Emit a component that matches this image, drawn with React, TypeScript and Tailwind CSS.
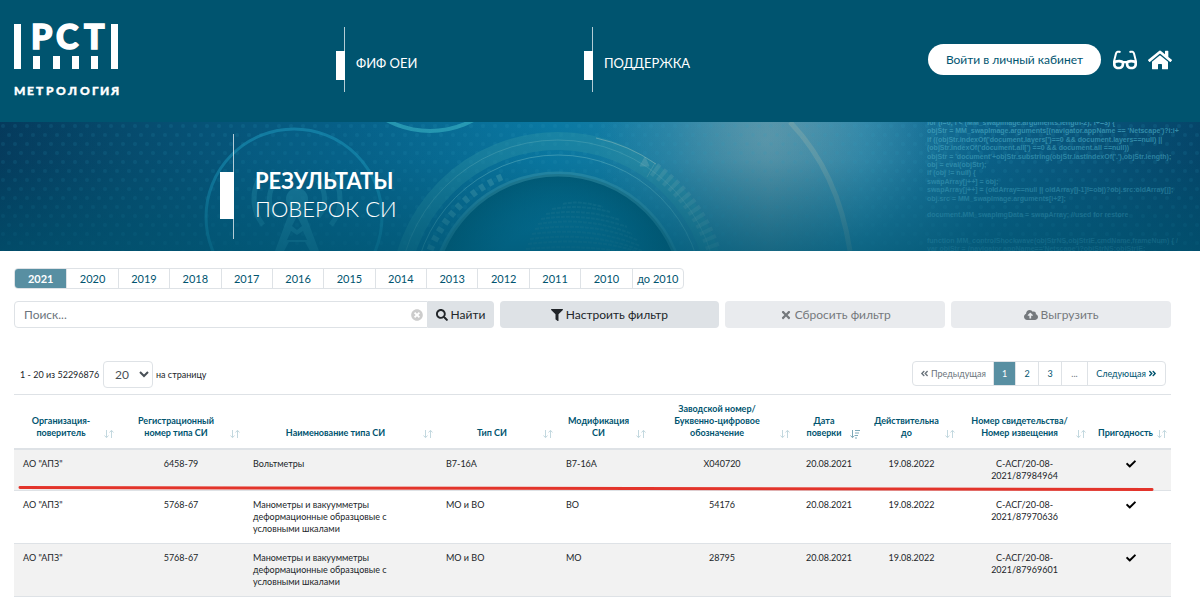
import {
  FaAngleDoubleLeft,
  FaAngleDoubleRight,
  FaCheck,
  FaCloudUploadAlt,
  FaFilter,
  FaGlasses,
  FaHome,
  FaSearch,
  FaTimes,
  FaTimesCircle,
} from "react-icons/fa";
import clsx from "clsx";

const years = [
  "2021", "2020", "2019", "2018", "2017", "2016", "2015",
  "2014", "2013", "2012", "2011", "2010", "до 2010",
];

const columns = [
  { title: "Организация-\nповеритель", col: "w-[104px]", align: "text-left" },
  { title: "Регистрационный\nномер типа СИ", col: "w-[126px]", align: "text-center" },
  { title: "Наименование типа СИ", col: "w-[193px]", align: "text-left" },
  { title: "Тип СИ", col: "w-[120px]", align: "text-left" },
  { title: "Модификация\nСИ", col: "w-[93px]", align: "text-left" },
  { title: "Заводской номер/\nБуквенно-цифровое\nобозначение", col: "w-[144px]", align: "text-center" },
  { title: "Дата\nповерки", col: "w-[70px]", align: "text-center", sorted: true },
  { title: "Действительна\nдо", col: "w-[95px]", align: "text-center" },
  { title: "Номер свидетельства/\nНомер извещения", col: "w-[131px]", align: "text-center" },
  { title: "Пригодность", col: "w-[81px]", align: "text-center" },
];

const rows = [
  ['АО "АПЗ"', "6458-79", "Вольтметры", "В7-16А", "В7-16А", "Х040720", "20.08.2021", "19.08.2022", "С-АСГ/20-08-\n2021/87984964"],
  ['АО "АПЗ"', "5768-67", "Манометры и вакуумметры\nдеформационные образцовые с\nусловными шкалами", "МО и ВО", "ВО", "54176", "20.08.2021", "19.08.2022", "С-АСГ/20-08-\n2021/87970636"],
  ['АО "АПЗ"', "5768-67", "Манометры и вакуумметры\nдеформационные образцовые с\nусловными шкалами", "МО и ВО", "МО", "28795", "20.08.2021", "19.08.2022", "С-АСГ/20-08-\n2021/87969601"],
];

const codeLines = [
  "for (i=0; i < (MM_swapImage.arguments.length-2); i+=3) {",
  "objStr = MM_swapImage.arguments[(navigator.appName == 'Netscape')?i:i+",
  "if ((objStr.indexOf('document.layers[')==0 && document.layers==null) ||",
  "(objStr.indexOf('document.all[')   ==0 && document.all   ==null))",
  "objStr = 'document'+objStr.substring(objStr.lastIndexOf('.'),objStr.length);",
  "obj = eval(objStr);",
  "if (obj != null) {",
  "swapArray[j++] = obj;",
  "swapArray[j++] = (oldArray==null || oldArray[j-1]!=obj)?obj.src:oldArray[j];",
  "obj.src = MM_swapImage.arguments[i+2];",
  "",
  "document.MM_swapImgData = swapArray; //used for restore",
  "",
  "",
  "function MM_controlShockwave(objStrNS,objStrIE,cmdName,frameNum) { /",
  "var objStr = (navigator.appName=='Netscape')?objStrNS:objStrIE;",
];

function Logo() {
  return (
    <a href="#" aria-label="РСТ Метрология" className="shrink-0 text-white">
      <svg width="106" height="73" viewBox="0 0 106 73" fill="currentColor" className="overflow-visible">
        <rect x="0" y="1" width="7" height="45" />
        <rect x="97" y="1" width="7" height="45" />
        <rect x="19" y="33" width="7" height="13" />
        <rect x="39" y="33" width="7" height="13" />
        <rect x="58" y="33" width="7" height="13" />
        <rect x="77" y="33" width="7" height="13" />
        <g stroke="currentColor" strokeWidth="1.5" className="font-['Lato',sans-serif] font-black">
          <text x="17 42 70" y="26" fontSize="34">
            РСТ
          </text>
        </g>
        <text
          x="0 13 22 32 42 54 66 78 86 97"
          y="72"
          fontSize="12"
          stroke="currentColor"
          strokeWidth="0.4"
          className="font-['Lato',sans-serif] font-black"
        >
          МЕТРОЛОГИЯ
        </text>
      </svg>
    </a>
  );
}

function NavItem({ label }: { label: string }) {
  return (
    <a href="#" className="flex w-[248px] items-center gap-[11px] text-[13px] text-white">
      <svg width="9" height="65" viewBox="0 0 9 65">
        <rect x="8" width="1" height="65" fill="#fff" opacity="0.7" />
        <rect y="24" width="9" height="29" fill="#fff" />
      </svg>
      <span className="pt-2">{label}</span>
    </a>
  );
}

function BannerArt() {
  return (
    <svg
      className="absolute inset-0 h-full w-full"
      viewBox="0 0 1200 129"
      preserveAspectRatio="xMidYMid slice"
      aria-hidden="true"
    >
      <defs>
        <linearGradient id="base" x1="0" x2="1" y1="0" y2="0">
          <stop offset="0" stopColor="#053a5c" />
          <stop offset="0.1" stopColor="#064a6c" />
          <stop offset="0.28" stopColor="#065f87" />
          <stop offset="0.46" stopColor="#0a79a3" />
          <stop offset="0.56" stopColor="#1a7ea4" />
          <stop offset="0.64" stopColor="#4089a4" />
          <stop offset="0.72" stopColor="#2583a8" />
          <stop offset="0.82" stopColor="#0b6189" />
          <stop offset="1" stopColor="#054569" />
        </linearGradient>
        <linearGradient id="fade" x1="0" x2="0" y1="0" y2="1">
          <stop offset="0" stopColor="#00546f" stopOpacity="0" />
          <stop offset="0.3" stopColor="#00546f" stopOpacity="0.08" />
          <stop offset="1" stopColor="#00546f" stopOpacity="0.65" />
        </linearGradient>
        <radialGradient id="glow">
          <stop offset="0" stopColor="#8ab0b8" stopOpacity="0.38" />
          <stop offset="1" stopColor="#8ab0b8" stopOpacity="0" />
        </radialGradient>
        <radialGradient id="disc">
          <stop offset="0.6" stopColor="#05769e" />
          <stop offset="1" stopColor="#005a76" />
        </radialGradient>
        <pattern id="dots" width="12" height="18" patternUnits="userSpaceOnUse">
          <circle cx="3" cy="4" r="2" fill="#2a9dc0" opacity="0.14" />
          <circle cx="9" cy="13" r="2" fill="#2a9dc0" opacity="0.14" />
        </pattern>
      </defs>
      <rect width="1200" height="129" fill="url(#base)" />
      <ellipse cx="765" cy="20" rx="170" ry="120" fill="url(#glow)" />
      <rect width="1200" height="129" fill="url(#dots)" />

      {/* antenna badge */}
      <circle cx="294" cy="95" r="88" fill="#0a7094" fillOpacity="0.2" stroke="#1b93b8" strokeWidth="3" strokeOpacity="0.6" />
      <g fill="none" stroke="#2b92b0" strokeWidth="5" opacity="0.45">
        <path d="M276 59a28 28 0 0 0 0 36M318 59a28 28 0 0 1 0 36" />
        <path d="M263 51a42 42 0 0 0 0 52M331 51a42 42 0 0 1 0 52" />
      </g>
      <circle cx="297" cy="77" r="11" fill="#2b92b0" opacity="0.55" />
      <path d="M291 86h12l16 43h-9l-5-9h-16l-5 9h-9zM297 94l-5 10 5 4 5-4zM291 109l-4 9h20l-4-9-6 4z" fill="#2b92b0" fillRule="evenodd" opacity="0.55" />
      <circle cx="430" cy="-82" r="91" fill="none" stroke="#3bb5c6" strokeWidth="4" opacity="0.6" />

      {/* dial */}
      <g fill="none">
        <circle cx="558" cy="178" r="159" stroke="#2f97a8" strokeWidth="18" opacity="0.4" />
        <circle cx="558" cy="178" r="160" stroke="#6db8c0" strokeWidth="1" opacity="0.35" />
        <circle cx="558" cy="178" r="145" stroke="#5cb1c2" strokeWidth="1" opacity="0.6" />
        <path d="M430 128A137 137 0 0 1 504 54" stroke="#5fb2bd" strokeWidth="7" strokeDasharray="5 5" opacity="0.4" />
        <path d="M654 47A162 162 0 0 1 714 129" stroke="#6fb0ba" strokeWidth="14" strokeDasharray="4 4" opacity="0.3" />
        <path d="M640 44l5-9 4 9zM655 41l-8 14" fill="#7fb5bd" stroke="#7fb5bd" opacity="0.35" />
        <path d="M596 16a168 168 0 0 1 60 26" stroke="#9cc3bf" strokeWidth="1" opacity="0.5" />
      </g>
      <circle cx="558" cy="178" r="126" fill="url(#disc)" stroke="#43a0b4" strokeOpacity="0.5" strokeWidth="5" />
      <g fill="none" stroke="#3f94a6" strokeWidth="2" strokeDasharray="4 1" opacity="0.25">
        <path d="M563 82q15-4 40 3M552 87q30-5 58 3M546 92q38-6 74 6M541 97q44-7 86 8M538 102q50-8 94 10M535 107q56-8 102 11M532 112q60-8 108 12M530 117q64-8 112 12M528 122q68-8 116 10M526 127q70-6 119 8" />
      </g>

      <path d="M790 0Q838 50 850 129" fill="none" stroke="#a9bcae" strokeWidth="5" opacity="0.28" />
      <rect width="1200" height="129" fill="url(#fade)" />
      <g fill="#45a5c0" opacity="0.75" fontSize="7" className="font-['Liberation_Sans',sans-serif] font-bold">
        {codeLines.map((line, i) => (
          <text key={i} x="927" y={3 + i * 8.4} opacity={1 - i * 0.05}>
            {line}
          </text>
        ))}
      </g>
    </svg>
  );
}

function SortIcon({ sorted }: { sorted?: boolean }) {
  return (
    <svg
      width="10"
      height="10"
      viewBox="0 0 10 10"
      fill="none"
      stroke={sorted ? "#7fa9b9" : "#c3d8df"}
      className="shrink-0"
    >
      <path d="M2.5 1v7.5M0.5 6.5l2 2.2 2-2.2" />
      {sorted ? (
        <path d="M5 1.5h5M5 4h4M5 6.5h3M5 9h2" />
      ) : (
        <path d="M7.5 9V1.5M5.5 3.5l2-2.2 2 2.2" />
      )}
    </svg>
  );
}

export default function App() {
  return (
    <div className="min-h-screen bg-white font-['Lato','Noto_Sans',sans-serif] text-[#212529]">
      <header className="flex items-center bg-[#00546f] pt-[23px] pr-[28px] pb-[26px] pl-[14px]">
        <Logo />
        <nav className="ml-[216px] flex flex-1">
          <NavItem label="ФИФ ОЕИ" />
          <NavItem label="ПОДДЕРЖКА" />
        </nav>
        <button className="h-[31px] rounded-full bg-white px-[18px] text-xs text-[#00546f]">
          Войти в личный кабинет
        </button>
        <a href="#" aria-label="Версия для слабовидящих" className="ml-3 text-white">
          <FaGlasses size={24} />
        </a>
        <a href="#" aria-label="Главная" className="ml-[11px] text-white">
          <FaHome size={24} />
        </a>
      </header>

      <section className="relative bg-[#065f87]">
        <BannerArt />
        <div className="relative flex h-[129px] items-center gap-[21px] pl-[220px] text-white">
          <svg width="14" height="105" viewBox="0 0 14 105">
            <rect x="13" width="1" height="105" fill="#fff" opacity="0.7" />
            <rect y="38" width="14" height="47" fill="#fff" />
          </svg>
          <h1 className="pt-4 text-[22px] leading-7 font-light">
            <span className="block font-bold">РЕЗУЛЬТАТЫ</span>
            <span className="block">ПОВЕРОК СИ</span>
          </h1>
        </div>
      </section>

      <main className="pt-[17px] pr-[29px] pb-1 pl-[14px]">
        {/* Years */}
        <div className="grid w-[670px] grid-cols-13 overflow-hidden rounded border border-[#dee2e6] text-[11px] text-[#00546f]">
          {years.map((year, i) => (
            <button
              key={year}
              className={clsx(
                "h-[19px] leading-[19px] whitespace-nowrap",
                i === 0 ? "bg-[#588fa2] font-bold text-white" : "border-l border-[#dee2e6]"
              )}
            >
              {year}
            </button>
          ))}
        </div>

        {/* Search and filters */}
        <div className="mt-3 flex gap-1.5 text-xs">
          <div className="flex h-[27px] flex-1">
            <label className="flex flex-1 items-center rounded-l border border-[#dee2e6] pr-1 pl-[9px]">
              <input
                type="text"
                aria-label="Поиск"
                placeholder="Поиск..."
                className="min-w-0 flex-1 outline-none placeholder:text-[#6c757d]"
              />
              <FaTimesCircle size={12} className="text-[#ccc]" />
            </label>
            <button className="flex w-[66px] items-center justify-center gap-[3px] rounded-r bg-[#dee2e6]">
              <FaSearch size={12} />
              Найти
            </button>
          </div>
          <button className="flex w-[19%] items-center justify-center gap-[3px] rounded bg-[#dee2e6]">
            <FaFilter size={12} />
            Настроить фильтр
          </button>
          <button disabled className="flex w-[19%] items-center justify-center gap-[3px] rounded bg-[#e9ebee] text-[#75797d]">
            <FaTimes size={12} />
            Сбросить фильтр
          </button>
          <button disabled className="flex w-[19%] items-center justify-center gap-[3px] rounded bg-[#e9ebee] text-[#75797d]">
            <FaCloudUploadAlt size={14} />
            Выгрузить
          </button>
        </div>

        {/* Paging */}
        <div className="mt-[33px] flex items-start justify-between pr-[5px] pl-[6px] text-[9px]">
          <div className="flex items-center">
            <span className="w-[83px]">1 - 20 из 52296876</span>
            <select
              aria-label="Записей на странице"
              className="h-[27px] w-[50px] rounded border border-[#dee2e6] bg-white pl-[7px] text-xs text-[#495057]"
            >
              <option>20</option>
              <option>50</option>
              <option>100</option>
            </select>
            <span className="ml-[3px]">на страницу</span>
          </div>
          <nav className="flex h-[25px] items-stretch divide-x divide-[#dee2e6] overflow-hidden rounded border border-[#dee2e6] text-[#00546f]">
            <button disabled className="flex w-[81px] items-center justify-center gap-0.5 text-[#6c757d]">
              <FaAngleDoubleLeft size={9} />
              Предыдущая
            </button>
            <button className="w-[22px] bg-[#588fa2] text-white">1</button>
            <button className="w-[23px]">2</button>
            <button className="w-[23px]">3</button>
            <button disabled className="w-[26px] text-[#6c757d]">...</button>
            <button className="flex w-[77px] items-center justify-center gap-0.5">
              Следующая
              <FaAngleDoubleRight size={9} />
            </button>
          </nav>
        </div>

        {/* Results */}
        <div className="relative mt-1.5">
          <table className="w-full table-fixed border-collapse text-[9px] leading-3">
            <colgroup>
              {columns.map((c) => (
                <col key={c.title} className={c.col} />
              ))}
            </colgroup>
            <thead>
              <tr className="border-t border-b-2 border-[#dee2e6] text-[#00546f]">
                {columns.map((c) => (
                  <th key={c.title} className="px-1 pt-2 pb-[9px] align-bottom font-bold">
                    <div className="flex items-end">
                      <span className="flex-1 whitespace-pre">{c.title}</span>
                      <SortIcon sorted={c.sorted} />
                    </div>
                  </th>
                ))}
              </tr>
            </thead>
            <tbody>
              {rows.map((row, i) => (
                <tr key={i} className="border-b border-[#dee2e6] odd:bg-[#f2f2f2]">
                  {row.map((cell, j) => (
                    <td key={j} className={clsx("px-[9px] py-2 align-top whitespace-pre", columns[j].align)}>
                      {cell}
                    </td>
                  ))}
                  <td className="px-[9px] py-2 align-top">
                    <FaCheck size={10} className="mx-auto mt-px text-black" aria-label="Пригоден" />
                  </td>
                </tr>
              ))}
            </tbody>
          </table>
          <svg
            className="pointer-events-none absolute top-[91px] left-0 h-2 w-full"
            viewBox="0 0 1157 8"
            preserveAspectRatio="none"
            aria-hidden="true"
          >
            <path d="M6 2.5L1138 4.5" stroke="#e3342b" strokeWidth="3" strokeLinecap="round" />
          </svg>
        </div>
      </main>
    </div>
  );
}
